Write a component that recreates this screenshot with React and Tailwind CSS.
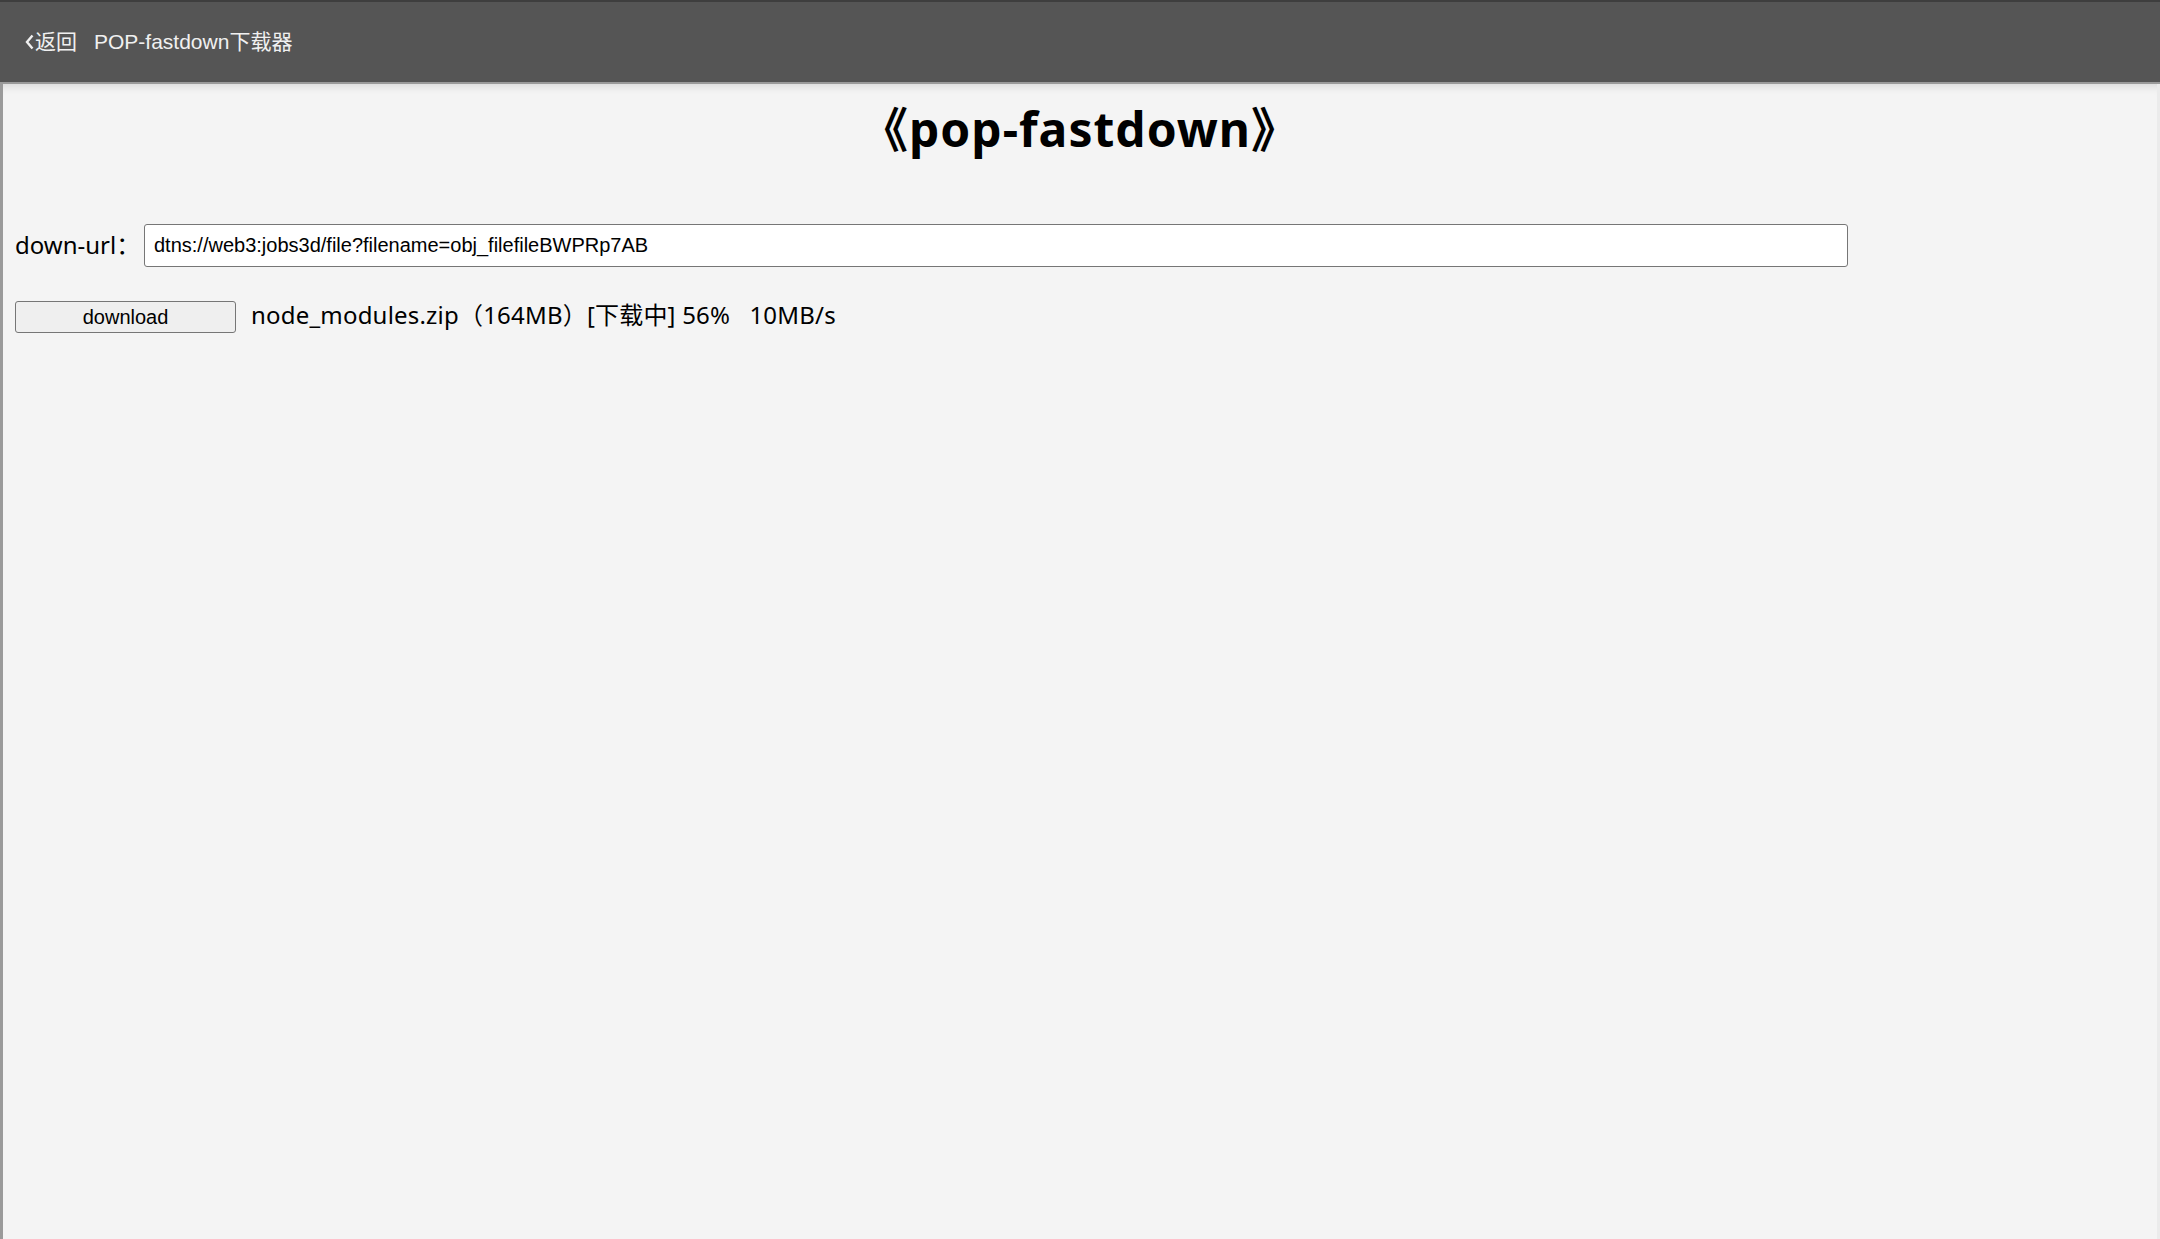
import React, { useState } from 'react';

const App = () => {
  const [url, setUrl] = useState('dtns://web3:jobs3d/file?filename=obj_filefileBWPRp7AB');

  return (
    <div className="h-[1239px] w-full flex flex-col bg-[#f4f4f4] overflow-hidden">
      {/* top bar */}
      <div className="h-[84px] shrink-0 flex items-center bg-[#555555] border-t-2 border-t-[#3e3e3e] border-b-2 border-b-[#9a9a9a] pl-[25px] text-[21px] text-[#f0f0f0] font-['Liberation_Sans','Noto_Sans_CJK_SC',sans-serif]">
        <span className="flex items-center">
          <svg width="9" height="16" viewBox="0 0 9 16" className="mr-[1px]">
            <path d="M7.5 1.5 L2 8 L7.5 14.5" fill="none" stroke="#f0f0f0" strokeWidth="2.4" />
          </svg>
          返回
        </span>
        <span className="ml-[17px]">POP-fastdown下载器</span>
      </div>

      <div className="flex-1 border-l-[3px] border-l-[#9a9a9a] border-r-[3px] border-r-[#ebebeb] shadow-[inset_0_10px_10px_-8px_rgba(0,0,0,0.12)] pt-[16px] px-[12px] text-black">
        <h1 className="text-center text-[48px] leading-[58px] font-bold tracking-[1px] font-['Noto_Sans','Noto_Sans_CJK_SC',sans-serif]">
          《pop-fastdown》
        </h1>

        <div className="mt-[66px] flex items-center font-['Noto_Sans','Noto_Sans_CJK_SC',sans-serif] text-[24px]">
          <span className="w-[129px] -mt-[2px]">down-url：</span>
          <input
            value={url}
            onChange={(e) => setUrl(e.target.value)}
            className="w-[1704px] h-[43px] bg-white border-[1.5px] border-[#767676] rounded-[3px] pl-[9px] text-[20px] font-['Liberation_Sans',sans-serif] text-black outline-none"
          />
        </div>

        <div className="mt-[33px] flex items-center">
          <button className="w-[221px] h-[32px] bg-[#efefef] border-[1.5px] border-[#767676] rounded-[3px] text-[20px] leading-none font-['Liberation_Sans',sans-serif] text-black">
            download
          </button>
          <span className="ml-[15px] -mt-[3px] text-[24px] tracking-[0.2px] font-['Noto_Sans','Noto_Sans_CJK_SC',sans-serif] whitespace-pre">
            node_modules.zip（164MB）[下载中] 56%   10MB/s
          </span>
        </div>
      </div>
    </div>
  );
};

export default App;
